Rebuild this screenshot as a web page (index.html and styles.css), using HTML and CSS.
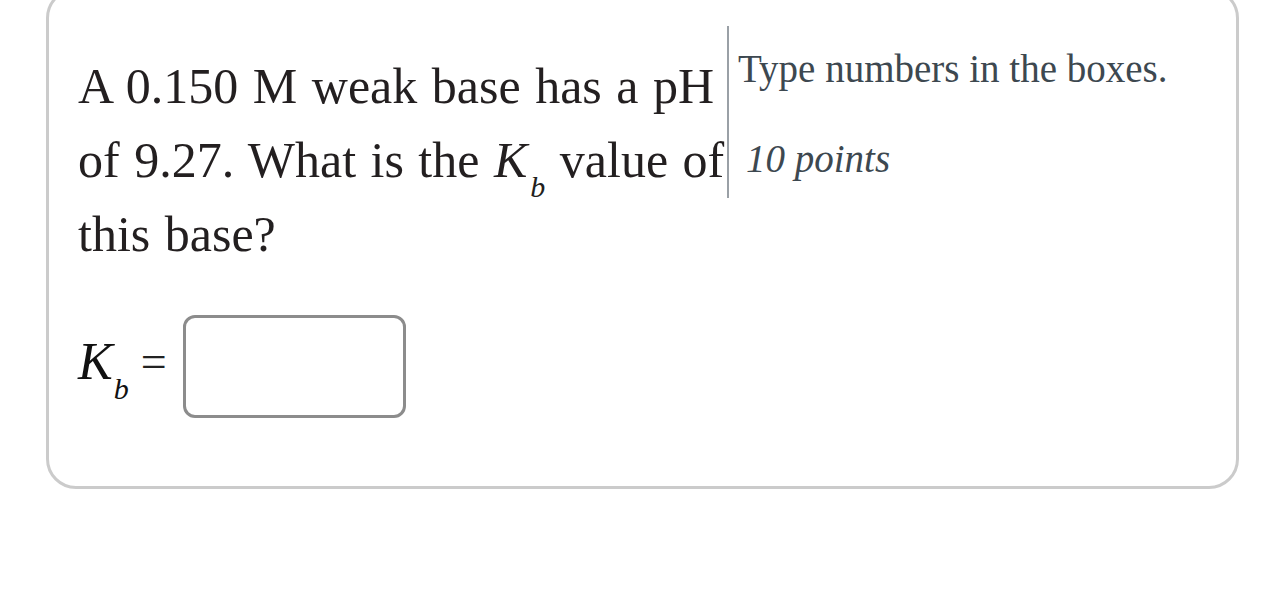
FILE: index.html
```html
<!DOCTYPE html>
<html lang="en">
<head>
<meta charset="utf-8">
<title>Weak base question</title>
<link rel="stylesheet" href="styles.css">
</head>
<body>
<div class="card">
  <div class="top">
    <div class="question">A 0.150 M weak base has a pH of 9.27. What is the <i class="var">K</i><sub class="sub">b</sub> value of this base?</div>
    <aside class="panel">
      <p class="instr">Type numbers in the boxes.</p>
      <p class="pts">10 points</p>
    </aside>
  </div>
  <div class="answer">
    <span class="kb"><i class="var">K</i><sub class="sub">b</sub></span>
    <span class="eq">=</span>
    <span class="box"></span>
  </div>
</div>
</body>
</html>
```
FILE: styles.css
```css
html, body {
  margin: 0;
  padding: 0;
  background: #ffffff;
}

body {
  font-family: "Liberation Serif", "Times New Roman", serif;
  overflow: hidden;
}

.card {
  box-sizing: border-box;
  width: 1193px;
  height: 501px;
  margin: -12px 0 0 46px;
  border: 3px solid #cbcbcb;
  border-radius: 30px;
  padding: 35px 0 0 29px;
}

.top {
  display: flex;
  align-items: flex-start;
}

.question {
  width: 649px;
  margin-top: 23px;
  font-size: 50px;
  line-height: 74px;
  color: #231f20;
  word-spacing: 2px;
}

.var {
  font-style: italic;
}

.sub {
  font-size: 30px;
  font-style: italic;
  line-height: 0;
  vertical-align: -20px;
  margin-left: 3px;
}

.panel {
  box-sizing: border-box;
  height: 172px;
  border-left: 2px solid #9aa0a6;
  padding: 14px 0 0 9px;
  color: #3d4850;
  font-size: 39px;
  line-height: 58px;
}

.panel p {
  margin: 0;
  white-space: nowrap;
}

.instr {
  margin-bottom: 32px !important;
}

.pts {
  font-style: italic;
  padding-left: 8px;
}

.answer {
  display: flex;
  align-items: center;
  margin-top: 44px;
}

.kb {
  font-size: 52px;
  line-height: 1;
  color: #111111;
  margin-bottom: 8px;
}

.kb .sub {
  vertical-align: -20px;
  margin-left: 1px;
}

.eq {
  font-size: 46px;
  line-height: 1;
  color: #222222;
  margin: 0 0 10px 12px;
}

.box {
  box-sizing: border-box;
  width: 223px;
  height: 103px;
  margin-left: 16px;
  border: 3px solid #8c8c8c;
  border-radius: 12px;
}
```
